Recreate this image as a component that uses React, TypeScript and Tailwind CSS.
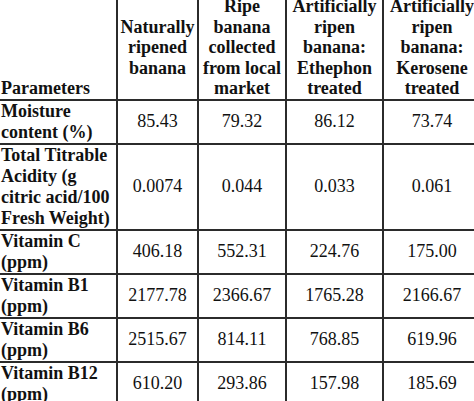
const header = [
  ['Naturally', 'ripened', 'banana'],
  ['Ripe', 'banana', 'collected', 'from local', 'market'],
  ['Artificially', 'ripen', 'banana:', 'Ethephon', 'treated'],
  ['Artificially', 'ripen', 'banana:', 'Kerosene', 'treated'],
];

const rows: { label: string[]; values: string[]; h: string }[] = [
  { label: ['Moisture', 'content (%)'], values: ['85.43', '79.32', '86.12', '73.74'], h: 'h-[43px]' },
  {
    label: ['Total Titrable', 'Acidity (g', 'citric acid/100', 'Fresh Weight)'],
    values: ['0.0074', '0.044', '0.033', '0.061'],
    h: 'h-[85px]',
  },
  { label: ['Vitamin C', '(ppm)'], values: ['406.18', '552.31', '224.76', '175.00'], h: 'h-[43px]' },
  { label: ['Vitamin B1', '(ppm)'], values: ['2177.78', '2366.67', '1765.28', '2166.67'], h: 'h-[43px]' },
  { label: ['Vitamin B6', '(ppm)'], values: ['2515.67', '814.11', '768.85', '619.96'], h: 'h-[43px]' },
  { label: ['Vitamin B12', '(ppm)'], values: ['610.20', '293.86', '157.98', '185.69'], h: 'h-[43px]' },
];

export default function App() {
  return (
    <div className="w-[474px] h-[401px] overflow-hidden bg-white font-['Liberation_Serif',serif] text-[18px] leading-[21px] text-[#111]">
      <table className="table-fixed border-collapse w-[480px] -mt-[4px]">
        <colgroup>
          <col className="w-[117px]" />
          <col className="w-[81px]" />
          <col className="w-[88px]" />
          <col className="w-[97px]" />
          <col className="w-[97px]" />
        </colgroup>
        <thead>
          <tr className="leading-[20.5px]">
            <th className="p-0 pl-px align-bottom text-left font-bold border-b-2 border-[#2b2b2b]">Parameters</th>
            {header.map((lines, i) => (
              <th
                key={i}
                className="p-0 align-middle text-center font-bold border-b-2 border-l-2 border-[#2b2b2b] whitespace-nowrap"
              >
                {lines.map((l, j) => (
                  <div key={j}>{l}</div>
                ))}
              </th>
            ))}
          </tr>
        </thead>
        <tbody>
          {rows.map((r, i) => (
            <tr key={i} className={r.h}>
              <td className="p-0 pl-px align-middle font-bold border-b-2 border-[#2b2b2b] whitespace-nowrap">
                {r.label.map((l, j) => (
                  <div key={j}>{l}</div>
                ))}
              </td>
              {r.values.map((v, j) => (
                <td key={j} className="p-0 align-middle text-center border-b-2 border-l-2 border-[#2b2b2b]">
                  {v}
                </td>
              ))}
            </tr>
          ))}
        </tbody>
      </table>
    </div>
  );
}
